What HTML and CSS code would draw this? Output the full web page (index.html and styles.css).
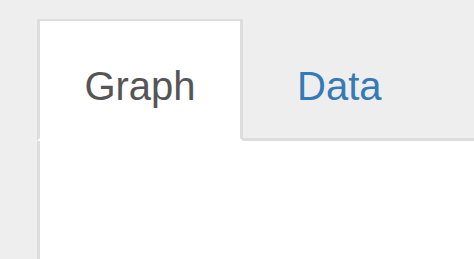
FILE: index.html
```html
<!DOCTYPE html>
<html>
<head>
<meta charset="utf-8">
<link rel="stylesheet" href="styles.css">
</head>
<body>
<div class="page">
  <ul class="tabs">
    <li class="tab active"><a>Graph</a></li>
    <li class="tab"><a class="link">Data</a></li>
  </ul>
  <div class="panel"></div>
</div>
</body>
</html>
```
FILE: styles.css
```css
html, body {
  margin: 0;
  padding: 0;
  background: #eee;
  font-family: "Liberation Sans", Arial, sans-serif;
}
.page {
  height: 259px;
  box-sizing: border-box;
  padding: 19px 0 0 37px;
  display: flex;
  flex-direction: column;
}
.tabs {
  list-style: none;
  margin: 0;
  padding: 0;
  display: flex;
  height: 122px;
  box-sizing: border-box;
  border-bottom: 3px solid #ddd;
}
.tab {
  font-size: 40px;
  line-height: 44px;
  box-sizing: border-box;
}
.tab.active {
  width: 206px;
  height: 122px;
  background: #fff;
  border: 3px solid #ddd;
  border-bottom: 3px solid #fff;
  border-top-width: 2px;
  color: #555;
  text-align: center;
  padding-top: 43px;
}
.tab .link {
  display: block;
  color: #337ab7;
  padding: 45px 0 0 54px;
}
.panel {
  flex: 1;
  background: #fff;
  border-left: 3px solid #ddd;
}
```
